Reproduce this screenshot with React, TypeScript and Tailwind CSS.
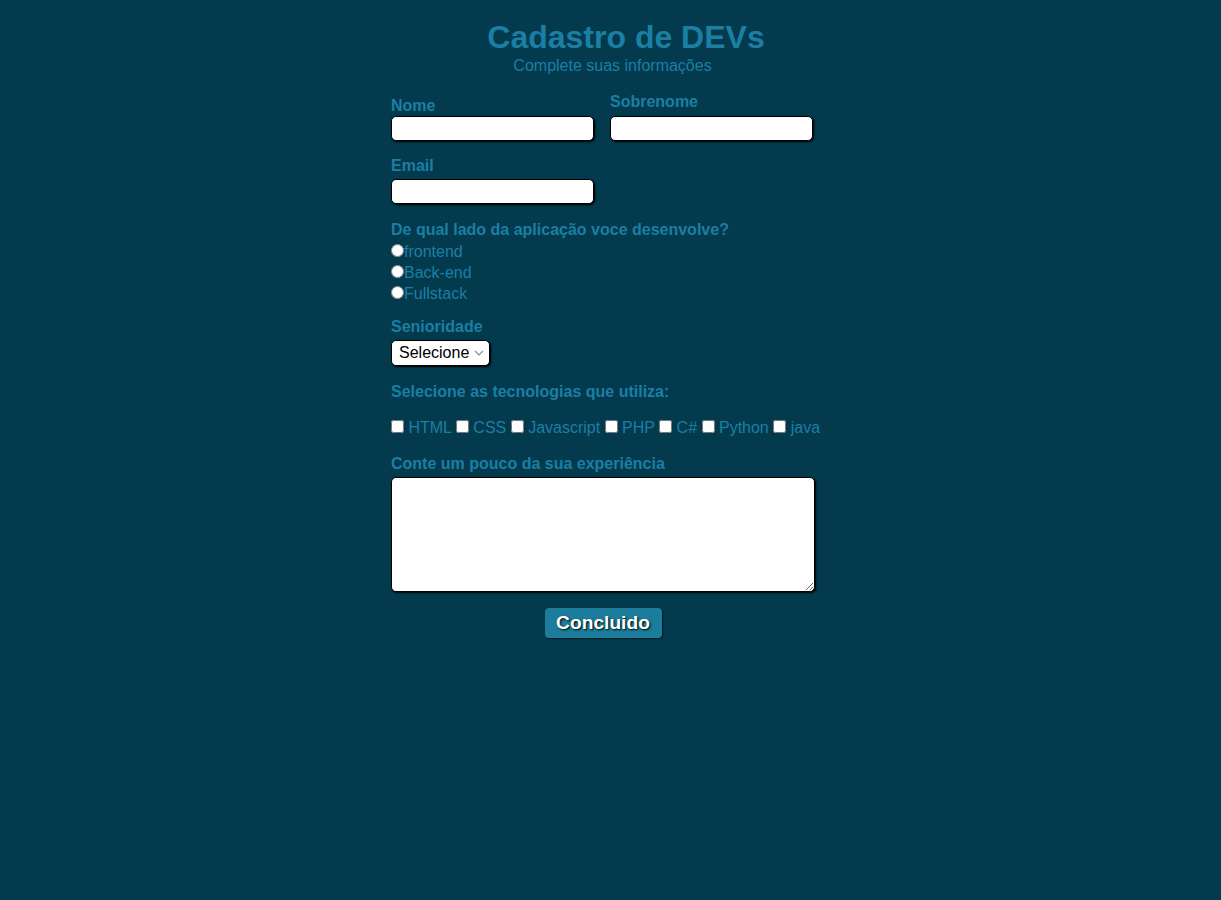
import React from "react";

const field =
  "h-[25px] w-[203px] rounded-[5px] border border-black bg-white shadow-[1px_1px_2px_#000]";
const label = "block text-[16px] font-bold leading-[18px]";

export default function App() {
  const techs = ["HTML", "CSS", "Javascript", "PHP", "C#", "Python", "java"];

  return (
    <div className="min-h-screen bg-[#033a4e] font-['Liberation_Sans',Arial,sans-serif] text-[#1b7fa4]">
      <div className="mx-auto w-[439px] pt-[19px]">
        <header className="text-center">
          <h1 className="pl-[31px] text-[32px] font-bold leading-[37px] whitespace-nowrap">
            Cadastro de DEVs
          </h1>
          <p className="mt-px pl-[4px] text-[16px] leading-[18px] whitespace-nowrap">
            Complete suas informações
          </p>
        </header>

        <form className="w-[424px]" onSubmit={(e) => e.preventDefault()}>
          <div className="mt-[18px] flex gap-[16px]">
            <div className="flex flex-col justify-end">
              <label className={`${label} mb-px`}>Nome</label>
              <input type="text" className={field} />
            </div>
            <div className="flex flex-col justify-end">
              <label className={`${label} mb-[5px]`}>Sobrenome</label>
              <input type="text" className={field} />
            </div>
          </div>

          <div className="mt-[16px]">
            <label className={label}>Email</label>
            <input type="email" className={`${field} mt-[4px]`} />
          </div>

          <div className="mt-[17px]">
            <p className={label}>De qual lado da aplicação voce desenvolve?</p>
            <div className="mt-[2px] text-[16px]">
              <div className="leading-[21px]">
                <input type="radio" name="lado" />
                frontend
              </div>
              <div className="leading-[21px]">
                <input type="radio" name="lado" />
                Back-end
              </div>
              <div className="leading-[21px]">
                <input type="radio" name="lado" />
                Fullstack
              </div>
            </div>
          </div>

          <div className="mt-[14px]">
            <label className={label}>Senioridade</label>
            <div className="relative mt-[4px] w-[99px]">
              <select className="block h-[26px] w-[99px] appearance-none rounded-[5px] border border-black bg-white pl-[7px] text-[16px] text-black shadow-[1px_1px_2px_#000]">
                <option>Selecione</option>
                <option>Junior</option>
                <option>Pleno</option>
                <option>Senior</option>
              </select>
              <svg
                className="pointer-events-none absolute right-[6px] top-[10px]"
                width="10"
                height="6"
                viewBox="0 0 10 6"
                fill="none"
              >
                <path d="M1 1l4 4 4-4" stroke="#8a8a8a" strokeWidth="1.1" />
              </svg>
            </div>
          </div>

          <p className={`${label} mt-[17px]`}>Selecione as tecnologias que utiliza:</p>
          <div className="mt-[18px] text-[16px] leading-[18px] whitespace-nowrap">
            {techs.map((t, i) => (
              <React.Fragment key={t}>
                <input type="checkbox" /> {t}
                {i < techs.length - 1 ? " " : ""}
              </React.Fragment>
            ))}
          </div>

          <div className="mt-[18px]">
            <label className={label}>Conte um pouco da sua experiência</label>
            <textarea className="mt-[4px] block h-[115px] w-[424px] rounded-[5px] border border-black bg-white shadow-[1px_1px_2px_#000]" />
          </div>

          <div className="mt-[16px] flex justify-center">
            <button
              type="submit"
              className="h-[30px] w-[117px] rounded-[4px] bg-[#1b7c9b] text-[19.2px] font-bold text-white shadow-[1px_1px_2px_rgba(0,0,0,0.5)] [text-shadow:1px_1px_2px_#000]"
            >
              Concluido
            </button>
          </div>
        </form>
      </div>
    </div>
  );
}
